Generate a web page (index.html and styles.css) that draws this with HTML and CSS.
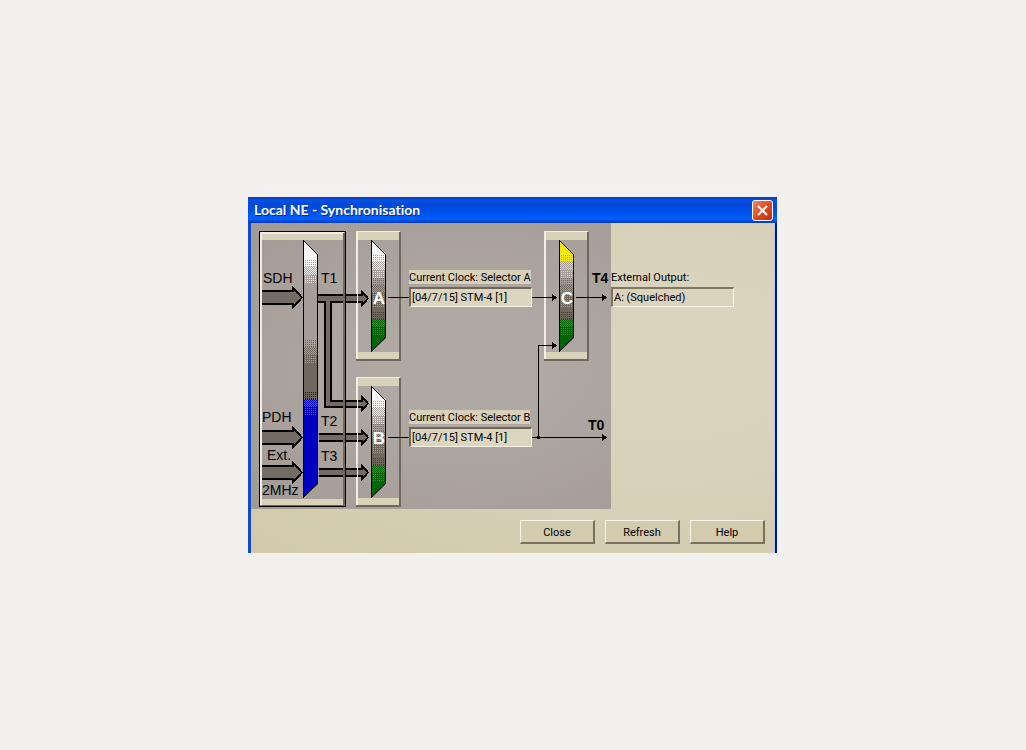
FILE: index.html
```html
<!DOCTYPE html>
<html lang="en">
<head>
<meta charset="utf-8">
<title>Local NE - Synchronisation</title>
<link rel="stylesheet" href="styles.css">
</head>
<body>
<main class="window">
  <header class="titlebar">
    <h1 class="title">Local NE - Synchronisation</h1>
    <button class="close" type="button" aria-label="Close window">
      <svg viewBox="0 0 21 21" width="21" height="21" aria-hidden="true"><path d="M6 6l9 9M15 6l-9 9" stroke="#fff" stroke-width="2"/></svg>
    </button>
  </header>
  <div class="content">
    <section class="diagram" aria-label="Clock selection">
      <svg class="drawing" viewBox="251 223 360 286" width="360" height="286" aria-hidden="true">
        <defs>
          <path id="sparse" class="dither" d="M1 .5h12M1 2.500h12M1 4.500h12M1 6.500h12"/>
          <path id="half" class="dither" d="M1 .5h12M0 1.500h13M1 2.500h12M0 3.500h13M1 4.500h12M0 5.500h13M1 6.500h12M0 7.500h13"/>
          <clipPath id="shape"><path d="M371 240L386 254V338L371 352z"/></clipPath>
          <clipPath id="tall"><path d="M303 240L318 254V484L303 498z"/></clipPath>
          <g id="frame">
            <path class="cream" d="M357 232h43v8h-43zM357 352h43v7h-43z"/>
            <path class="dark" d="M399 232h2v129h-45v-2h43z"/>
            <path class="light" d="M356 231h44v1h-42v127h-2z"/>
          </g>
          <g id="lower">
            <path class="mid" d="M371 262h15v31h-15z"/>
            <path class="dark" d="M371 293h15v34h-15z"/>
            <path class="green" d="M371 327h15v25h-15z"/>
            <use href="#sparse" class="dark" x="372" y="278"/>
            <use href="#half" class="dark" x="372" y="285"/>
            <use href="#sparse" class="mid" x="372" y="294"/>
            <use href="#sparse" class="mid" x="372" y="300"/>
            <use href="#sparse" class="green" x="372" y="312"/>
            <use href="#half" class="green" x="372" y="319"/>
            <use href="#sparse" class="dark" x="372" y="328"/>
          </g>
          <g id="fade">
            <path d="M371 240h15v22h-15z"/>
            <use href="#sparse" class="mid" x="372" y="255"/>
            <use href="#half" x="372" y="262"/>
            <use href="#sparse" x="372" y="271"/>
          </g>
          <path id="outline" class="line" d="M371.500 240.500L385.500 254.500V337.500L371.500 351.500z"/>
          <path id="tip" d="M0 -3.500L5 0L0 3.500z"/>
        </defs>

        <path class="cream" d="M262 234h82v6h-82zM262 499h82v6h-82z"/>
        <path class="light" d="M260 232h84v2h-82v271h-2z"/>
        <path class="dark" d="M343 233h2v273h-84v-1h82z"/>
        <path class="line" d="M259.500 231.500h86v275h-86z"/>

        <use href="#frame"/>
        <use href="#frame" y="146"/>
        <use href="#frame" x="188"/>

        <g class="arrow">
          <path d="M262 291H293V288L302 297.500L293 307V304H262"/>
          <path d="M262 431H293V428L302 437.500L293 447V444H262"/>
          <path d="M262 466H293V463L302 472.500L293 482V479H262"/>
          <path d="M318 295H362V292L368 298.500L362 305V302H331V401H362V397L368 403.500L362 410V407H325V302H318"/>
          <path d="M319 434H362V431L368 437.500L362 444V441H319"/>
          <path d="M319 469H362V466L368 472.500L362 479V476H319"/>
        </g>
        <path class="light" d="M357 290h1v16h-1zM357 395h1v90h-1z"/>
        <path class="dark" d="M343 290h2v190h-2z"/>
        <path class="ink" d="M345 290h1v190h-1z"/>

        <g clip-path="url(#tall)">
          <path class="white" d="M303 240h15v27h-15z"/>
          <path class="mid" d="M303 267h15v88h-15z"/>
          <path class="dark" d="M303 355h15v52h-15z"/>
          <path class="blue" d="M303 407h15v91h-15z"/>
          <use href="#sparse" class="mid" x="304" y="260"/>
          <use href="#half" class="white" x="304" y="267"/>
          <use href="#sparse" class="white" x="304" y="276"/>
          <use href="#sparse" class="dark" x="304" y="340"/>
          <use href="#half" class="dark" x="304" y="347"/>
          <use href="#sparse" class="mid" x="304" y="356"/>
          <use href="#sparse" class="blue" x="304" y="392"/>
          <use href="#half" class="blue" x="304" y="399"/>
          <use href="#sparse" class="dark" x="304" y="408"/>
        </g>
        <path class="line" d="M303.500 240.500L317.500 254.500V483.500L303.500 497.500z"/>

        <g clip-path="url(#shape)"><use href="#lower"/><use href="#fade" class="white"/></g>
        <use href="#outline"/>
        <g transform="translate(0 146)"><g clip-path="url(#shape)"><use href="#lower"/><use href="#fade" class="white"/></g><use href="#outline"/></g>
        <g transform="translate(188 0)"><g clip-path="url(#shape)"><use href="#lower"/><use href="#fade" class="yellow"/></g><use href="#outline"/></g>

        <path class="line" d="M388 297.500h21M388 437.500h21M532 297.500h22M576 297.500h28M532 437.500h72M538.500 437V345.500H554"/>
        <circle cx="538.500" cy="437.500" r="2"/>
        <use href="#tip" x="552" y="297.500"/>
        <use href="#tip" x="552" y="345.500"/>
        <use href="#tip" x="602" y="297.500"/>
        <use href="#tip" x="602" y="437.500"/>

        <g class="port">
          <text x="263" y="283">SDH</text>
          <text x="262" y="422">PDH</text>
          <text x="267" y="460">Ext.</text>
          <text x="262" y="495">2MHz</text>
          <text x="321" y="283">T1</text>
          <text x="321" y="426">T2</text>
          <text x="321" y="461">T3</text>
        </g>
        <g class="output">
          <text x="592" y="283">T4</text>
          <text x="588" y="430">T0</text>
        </g>
        <g class="letter">
          <text x="379" y="304">A</text>
          <text x="379" y="444">B</text>
          <text x="567" y="304">C</text>
        </g>
      </svg>
      <div class="clock clock-a">
        <label class="caption" for="clock-a">Current Clock: Selector A</label>
        <input class="field" id="clock-a" type="text" value="[04/7/15] STM-4 [1]" readonly>
      </div>
      <div class="clock clock-b">
        <label class="caption" for="clock-b">Current Clock: Selector B</label>
        <input class="field" id="clock-b" type="text" value="[04/7/15] STM-4 [1]" readonly>
      </div>
    </section>
    <section class="external">
      <label class="caption" for="external">External Output:</label>
      <input class="field field-flat" id="external" type="text" value="A: (Squelched)" readonly>
    </section>
  </div>
  <footer class="actions">
    <button class="action" type="button">Close</button>
    <button class="action" type="button">Refresh</button>
    <button class="action" type="button">Help</button>
  </footer>
</main>
</body>
</html>
```
FILE: styles.css
```css
* { box-sizing: border-box; }
body {
  margin: 0;
  padding-right: 1px;
  min-height: 100vh;
  display: flex;
  align-items: center;
  justify-content: center;
  background: #f1f0ee;
  color: #000;
  font: 11px/13px Roboto, "Liberation Sans", sans-serif;
}
.window {
  width: 529px;
  max-width: 100%;
  background: radial-gradient(ellipse at 75% 45%, #dad3bd 30%, #d2c9ab);
  border-left: 3px solid #1248cc;
  border-right: 2px solid #001c8c;
  box-shadow: inset -1px 0 #b4c4ec, 0 0 24px 8px #f3f1f0;
}
.titlebar {
  display: flex;
  align-items: center;
  justify-content: space-between;
  height: 26px;
  margin: 0 -2px 0 -3px;
  padding: 0 4px 0 6px;
  background: linear-gradient(#0a3cc0, #0550e0 12%, #0048d8 30%, #0050e8 55%, #0060fc 85%, #0038b8);
}
.title {
  margin: 0;
  color: #fff;
  font: bold 14px/16px Lato, "Trebuchet MS", sans-serif;
  font-variant-ligatures: none;
  text-shadow: 1px 1px #0a2a90;
}
.close {
  width: 21px;
  height: 21px;
  padding: 0;
  border: 1px solid #fff;
  border-radius: 3px;
  background: linear-gradient(135deg, #ec8868, #dc4a24 50%, #c03010);
}
.close svg { display: block; margin: -1px; }
.content { display: flex; }
.diagram {
  position: relative;
  flex: none;
  background: radial-gradient(ellipse at 60% 50%, #b0a8a3 30%, #a39a95);
}
.drawing { display: block; shape-rendering: crispEdges; }
.clock {
  position: absolute;
  left: 158px;
  width: 123px;
}
.clock-a { top: 47px; }
.clock-b { top: 187px; }
.caption {
  display: block;
  width: max-content;
  padding-top: 1px;
  white-space: nowrap;
}
.clock .caption { background: #d8d0b8; }
.field {
  display: block;
  width: 123px;
  height: 20px;
  margin-top: 3px;
  padding: 0 1px;
  border: 1px solid #f8f4e8;
  border-top: 2px solid #70675a;
  border-left: 2px solid #70675a;
  border-radius: 0;
  background: #ddd6bf;
  color: #000;
  font: inherit;
  outline: none;
}
.external { flex: 1; padding-top: 47px; }
.field-flat {
  border-color: #80775f #f8f4e8 #f8f4e8 #80775f;
  background: transparent;
}
.actions {
  display: flex;
  justify-content: flex-end;
  gap: 10px;
  padding: 11px 10px 9px;
}
.action {
  width: 75px;
  height: 24px;
  padding: 2px 0 0;
  border: 1px solid #f8f4e8;
  border-right: 2px solid #7a705e;
  border-bottom: 2px solid #7a705e;
  border-radius: 0;
  background: #d4cbae;
  color: #000;
  font: inherit;
}
.cream { color: #dad2b8; fill: currentColor; }
.light { color: #f2eee6; fill: currentColor; }
.dark { color: #70675f; fill: currentColor; }
.mid { color: #a69d98; fill: currentColor; }
.green { color: #006400; fill: currentColor; }
.blue { color: #0000c0; fill: currentColor; }
.white { color: #f8f6f6; fill: currentColor; }
.yellow { color: #f4ec00; fill: currentColor; }
.ink { fill: #000; }
.dither { fill: none; stroke: currentColor; stroke-width: 1px; stroke-dasharray: 1 1; }
.line { fill: none; stroke: #000; stroke-width: 1px; }
.arrow { fill: #756b65; stroke: #000; stroke-width: 2px; }
.port { font: 14px "Liberation Sans", Arial, sans-serif; }
.output { font: bold 14px "Liberation Sans", Arial, sans-serif; }
.letter { font: bold 17px "Liberation Sans", Arial, sans-serif; fill: #fff; text-anchor: middle; }
```
